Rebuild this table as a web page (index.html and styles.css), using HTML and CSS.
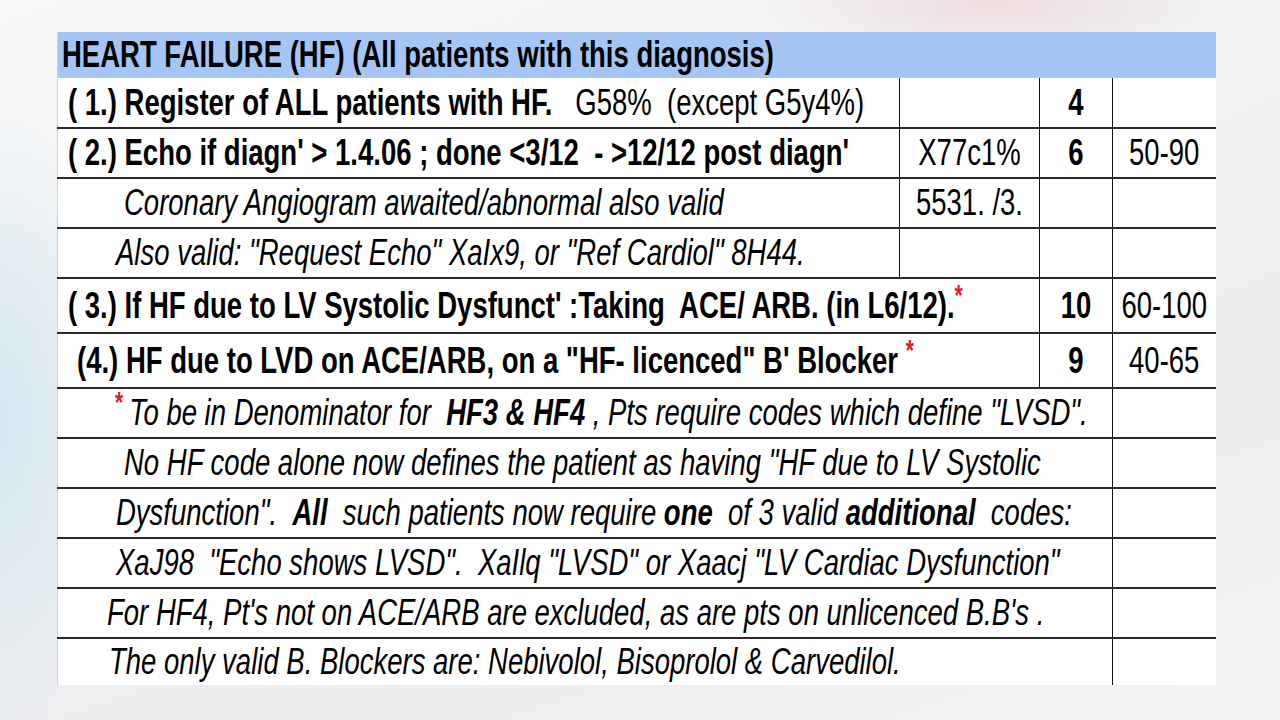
FILE: index.html
```html
<!DOCTYPE html>
<html lang="en">
<head>
<meta charset="utf-8">
<title>Heart Failure</title>
<link rel="stylesheet" href="styles.css">
</head>
<body>
<div class="slide">
  <table class="hf">
    <colgroup>
      <col class="c1"><col class="c2"><col class="c3"><col class="c4">
    </colgroup>
    <tr class="head"><td colspan="4"><span class="t">HEART FAILURE (HF) (All patients with this diagnosis)</span></td></tr>
    <tr class="row first">
      <td class="desc in-a"><span class="t"><b>( 1.) Register of ALL patients with HF.</b>&nbsp;&nbsp; G58%&nbsp; (except G5y4%)</span></td>
      <td class="code"></td><td class="pts"><span class="t">4</span></td><td class="rng"></td>
    </tr>
    <tr class="row">
      <td class="desc in-a"><span class="t"><b>( 2.) Echo if diagn' &gt; 1.4.06 ; done &lt;3/12&nbsp; - &gt;12/12 post diagn'</b></span></td>
      <td class="code"><span class="t">X77c1%</span></td><td class="pts"><span class="t">6</span></td><td class="rng"><span class="t">50-90</span></td>
    </tr>
    <tr class="row">
      <td class="desc note in-c"><span class="t">Coronary Angiogram awaited/abnormal also valid</span></td>
      <td class="code"><span class="t">5531. /3.</span></td><td class="pts"></td><td class="rng"></td>
    </tr>
    <tr class="row">
      <td class="desc note in-d"><span class="t">Also valid: "Request Echo" XaIx9, or "Ref Cardiol" 8H44.</span></td>
      <td class="code"></td><td class="pts"></td><td class="rng"></td>
    </tr>
    <tr class="row tall">
      <td class="desc in-a" colspan="2"><span class="t"><b>( 3.) If HF due to LV Systolic Dysfunct' :Taking&nbsp; ACE/ ARB. (in L6/12).</b><sup class="star">*</sup></span></td>
      <td class="pts"><span class="t">10</span></td><td class="rng"><span class="t">60-100</span></td>
    </tr>
    <tr class="row tall">
      <td class="desc in-b" colspan="2"><span class="t"><b>(4.) HF due to LVD on ACE/ARB, on a "HF- licenced" B' Blocker</b> <sup class="star">*</sup></span></td>
      <td class="pts"><span class="t">9</span></td><td class="rng"><span class="t">40-65</span></td>
    </tr>
    <tr class="row">
      <td class="desc note in-e" colspan="3"><span class="t"><sup class="star">*</sup>To be in Denominator for&nbsp; <b>HF3 &amp; HF4</b> , Pts require codes which define "LVSD".</span></td>
      <td class="rng"></td>
    </tr>
    <tr class="row">
      <td class="desc note in-c" colspan="3"><span class="t">No HF code alone now defines the patient as having "HF due to LV Systolic</span></td>
      <td class="rng"></td>
    </tr>
    <tr class="row">
      <td class="desc note in-d" colspan="3"><span class="t">Dysfunction".&nbsp; <b>All</b>&nbsp; such patients now require <b>one</b>&nbsp; of 3 valid <b>additional</b>&nbsp; codes:</span></td>
      <td class="rng"></td>
    </tr>
    <tr class="row">
      <td class="desc note in-d" colspan="3"><span class="t">XaJ98&nbsp; "Echo shows LVSD".&nbsp; XaIlq "LVSD" or Xaacj "LV Cardiac Dysfunction"</span></td>
      <td class="rng"></td>
    </tr>
    <tr class="row">
      <td class="desc note in-f" colspan="3"><span class="t">For HF4, Pt's not on ACE/ARB are excluded, as are pts on unlicenced B.B's .</span></td>
      <td class="rng"></td>
    </tr>
    <tr class="row last">
      <td class="desc note in-g" colspan="3"><span class="t">The only valid B. Blockers are: Nebivolol, Bisoprolol &amp; Carvedilol.</span></td>
      <td class="rng"></td>
    </tr>
  </table>
</div>
</body>
</html>
```

FILE: styles.css
```css
html, body {
  margin: 0;
  padding: 0;
}

body {
  width: 1280px;
  height: 720px;
  overflow: hidden;
  font-family: "Liberation Sans", Arial, sans-serif;
  color: #000;
  background:
    radial-gradient(ellipse 240px 50px at 990px 6px, rgba(236, 200, 204, 0.5), rgba(236, 200, 204, 0) 100%),
    radial-gradient(ellipse 130px 320px at 0px 420px, rgba(208, 230, 240, 0.85), rgba(208, 230, 240, 0) 100%),
    linear-gradient(160deg, #f7f8f9 0%, #f0f1f3 45%, #ecedef 70%, #f2f3f4 100%);
}

.slide {
  padding-top: 32px;
  padding-left: 57px;
}

.hf {
  table-layout: fixed;
  width: 1158px;
  border-collapse: collapse;
  background: #fff;
  border-left: 1px solid #c9d6e2;
}

.c1 { width: 842px; }
.c2 { width: 140px; }
.c3 { width: 73px; }
.c4 { width: 103px; }

.hf td {
  padding: 0;
  font-size: 27.5px;
  line-height: 30px;
  white-space: nowrap;
  vertical-align: middle;
  border-top: 2px solid #2b2b2b;
}

.t {
  display: inline-block;
  transform: scaleY(1.36);
  transform-origin: 50% 55%;
}

.head td {
  height: 46px;
  background: #a5c6f5;
  font-weight: bold;
  padding-left: 4px;
  border-top: none;
  border-left: 1px solid #c9d6e2;
}

.row td {
  height: 48px;
}

.row.first td {
  height: 49px;
  border-top: none;
}

.row.tall td {
  height: 53px;
}

.row.last td {
  height: 46px;
}

.code, .pts, .rng {
  text-align: center;
  border-left: 1px solid #111;
}

.pts {
  font-weight: bold;
}

.note {
  font-style: italic;
}

.star {
  color: #e0201f;
  font-style: normal;
  font-weight: bold;
  font-size: 21px;
  line-height: 0;
  vertical-align: 9px;
}

.in-e .star {
  margin-right: 6px;
}

.in-a { padding-left: 10px !important; }
.in-b { padding-left: 19px !important; }
.in-c { padding-left: 66px !important; }
.in-d { padding-left: 58px !important; }
.in-e { padding-left: 57px !important; }
.in-f { padding-left: 49px !important; }
.in-g { padding-left: 51px !important; }
```
